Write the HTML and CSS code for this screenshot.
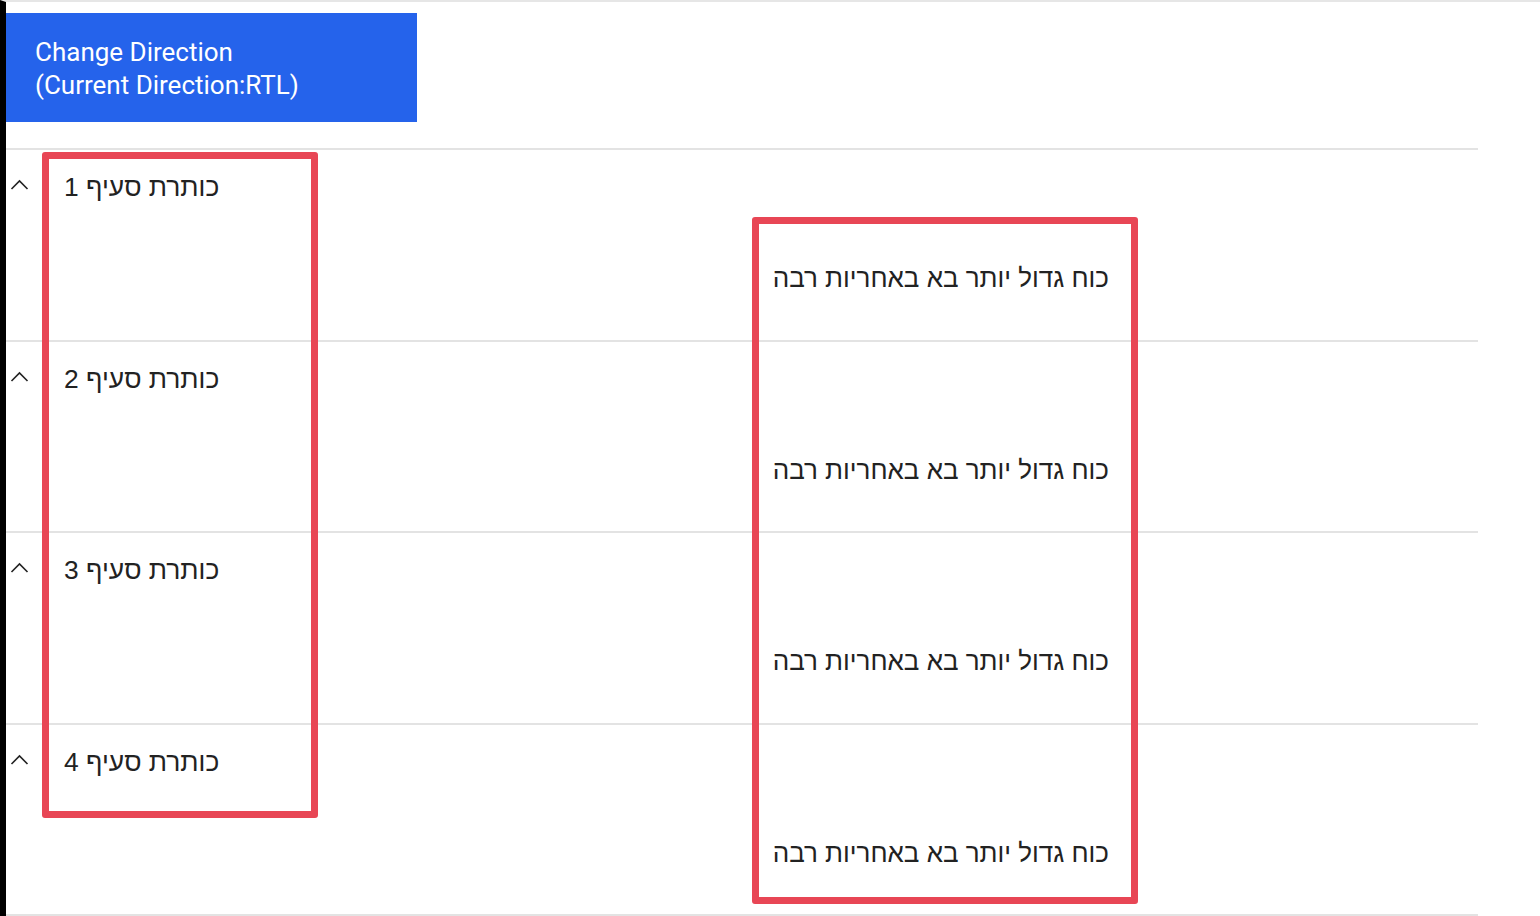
FILE: index.html
```html
<!DOCTYPE html>
<html lang="he">
<head>
<meta charset="utf-8">
<title>Accordion RTL</title>
<link rel="stylesheet" href="styles.css">
</head>
<body>
<div class="page">
  <div class="toolbar">
    <button class="dir-btn">Change Direction<br>(Current Direction:RTL)</button>
  </div>
  <div class="accordion">
    <div class="row">
      <div class="chev"><svg width="19" height="13" viewBox="0 0 19 13"><path d="M1.5 11 L9.5 3 L17.5 11" fill="none" stroke="#222" stroke-width="1.6"/></svg></div>
      <div class="title" dir="rtl">כותרת סעיף 1</div>
      <div class="content" dir="rtl">כוח גדול יותר בא באחריות רבה</div>
    </div>
    <div class="row">
      <div class="chev"><svg width="19" height="13" viewBox="0 0 19 13"><path d="M1.5 11 L9.5 3 L17.5 11" fill="none" stroke="#222" stroke-width="1.6"/></svg></div>
      <div class="title" dir="rtl">כותרת סעיף 2</div>
      <div class="content" dir="rtl">כוח גדול יותר בא באחריות רבה</div>
    </div>
    <div class="row">
      <div class="chev"><svg width="19" height="13" viewBox="0 0 19 13"><path d="M1.5 11 L9.5 3 L17.5 11" fill="none" stroke="#222" stroke-width="1.6"/></svg></div>
      <div class="title" dir="rtl">כותרת סעיף 3</div>
      <div class="content" dir="rtl">כוח גדול יותר בא באחריות רבה</div>
    </div>
    <div class="row last">
      <div class="chev"><svg width="19" height="13" viewBox="0 0 19 13"><path d="M1.5 11 L9.5 3 L17.5 11" fill="none" stroke="#222" stroke-width="1.6"/></svg></div>
      <div class="title" dir="rtl">כותרת סעיף 4</div>
      <div class="content" dir="rtl">כוח גדול יותר בא באחריות רבה</div>
    </div>
  </div>
  <div class="mark mark-titles"></div>
  <div class="mark mark-contents"></div>
</div>
</body>
</html>
```
FILE: styles.css
```css
html, body {
  margin: 0;
  padding: 0;
  background: #fff;
}
body {
  font-family: Roboto, "Liberation Sans", "DejaVu Sans", sans-serif;
  color: #222;
  overflow: hidden;
}
.page {
  position: relative;
  height: 916px;
  box-sizing: border-box;
  border-left: 6px solid #000;
  border-top: 2px solid #e6e6e6;
}
.toolbar {
  padding-top: 11px;
  height: 135px;
  box-sizing: border-box;
}
.dir-btn {
  display: block;
  width: 411px;
  height: 109px;
  margin: 0;
  border: none;
  background: #2563eb;
  color: #fff;
  font-family: Roboto, "Liberation Sans", sans-serif;
  font-size: 26px;
  line-height: 33px;
  text-align: left;
  padding: 2px 0 0 29px;
}
.accordion {
  width: 1472px;
  padding-top: 11px;
}
.row {
  display: flex;
  align-items: flex-start;
  height: 191.5px;
  box-sizing: border-box;
  border-top: 2px solid #e3e3e3;
}
.row.last {
  height: 193px;
  border-bottom: 2px solid #e3e3e3;
}
.chev {
  width: 58px;
  padding-left: 4px;
  padding-top: 28px;
  box-sizing: border-box;
  display: flex;
}
.title {
  width: 709px;
  padding-top: 22px;
  font-family: "Liberation Sans", "DejaVu Sans", sans-serif;
  font-size: 26.4px;
  line-height: 30px;
  direction: rtl;
  display: flex;
  justify-content: flex-end;
}
.title, .content {
  color: #222;
}
.content {
  width: 336px;
  padding-top: 113px;
  font-family: "Liberation Sans", "DejaVu Sans", sans-serif;
  font-size: 26px;
  line-height: 30px;
  text-align: right;
  white-space: nowrap;
}
.mark {
  position: absolute;
  border: 7px solid #e84655;
  border-radius: 3px;
  box-sizing: border-box;
}
.mark-titles {
  left: 36px;
  top: 150px;
  width: 276px;
  height: 666px;
}
.mark-contents {
  left: 746px;
  top: 215px;
  width: 386px;
  height: 687px;
}
```
